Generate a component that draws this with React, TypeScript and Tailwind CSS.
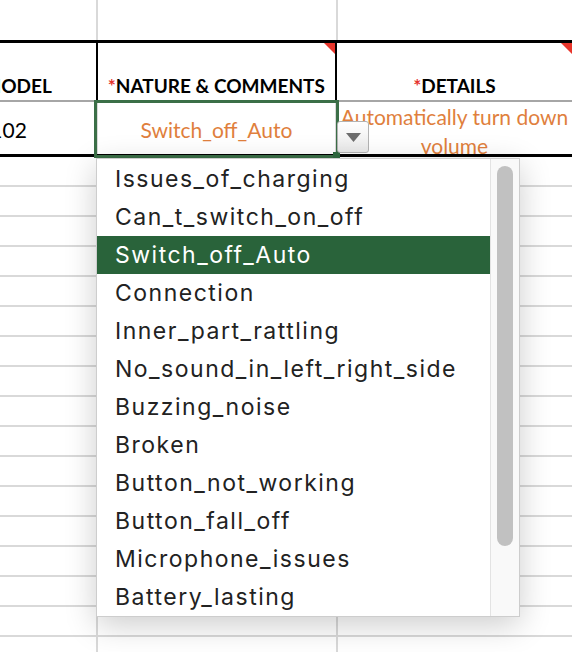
import React from 'react';

const options = [
  'Issues_of_charging',
  'Can_t_switch_on_off',
  'Switch_off_Auto',
  'Connection',
  'Inner_part_rattling',
  'No_sound_in_left_right_side',
  'Buzzing_noise',
  'Broken',
  'Button_not_working',
  'Button_fall_off',
  'Microphone_issues',
  'Battery_lasting',
];

const selected = 'Switch_off_Auto';

// red comment marker in the top-right corner of a header cell
const CommentMark = () => (
  <svg className="absolute right-0 top-0" width="11" height="11" viewBox="0 0 11 11">
    <polygon points="0,0 11,0 11,11" fill="#e8352b" />
  </svg>
);

const BlankRow = () => (
  <div className="flex h-[30px] border-b-2 border-[#d9d9d9]">
    <div className="w-[98px] border-r-2 border-[#d9d9d9]" />
    <div className="w-[240px] border-r-2 border-[#d9d9d9]" />
    <div className="flex-1" />
  </div>
);

const Dropdown: React.FC<{ items: string[]; value: string }> = ({ items, value }) => (
  <div className="absolute left-[96px] top-[158px] flex h-[459px] w-[424px] border border-[#cdcdcd] bg-white shadow-[0_8px_30px_rgba(0,0,0,0.2)]">
    <ul className="flex-1 pt-[1px] font-['Inter',sans-serif] text-[23px] tracking-[1.5px] text-[#222]">
      {items.map((item) => (
        <li
          key={item}
          className={`flex h-[38px] items-center pl-[18px] whitespace-nowrap ${
            item === value ? 'bg-[#29633a] text-white' : ''
          }`}
        >
          {item}
        </li>
      ))}
    </ul>
    <div className="w-[29px] border-l border-[#e3e3e3] bg-[#f9f9f9] pt-[7px]">
      <div className="mx-auto h-[380px] w-[16px] rounded-full bg-[#c1c1c1]" />
    </div>
  </div>
);

export default function App() {
  return (
    <div className="relative h-[652px] w-[572px] overflow-hidden bg-white font-['Lato',sans-serif]">
      {/* row above the header */}
      <div className="flex h-[40px]">
        <div className="w-[98px] border-r-2 border-[#d9d9d9]" />
        <div className="w-[240px] border-r-2 border-[#d9d9d9]" />
        <div className="flex-1" />
      </div>

      {/* header */}
      <div className="flex h-[62px] border-t-[3px] border-b-2 border-t-black border-b-[#a6a6a6] text-[19px] font-bold text-black">
        <div className="flex w-[98px] items-end justify-end overflow-hidden whitespace-nowrap border-r-2 border-black pr-[44px]">
          MODEL
        </div>
        <div className="relative flex w-[240px] items-end justify-center whitespace-nowrap border-r-2 border-black">
          <span className="text-[#e5322d]">*</span>NATURE &amp; COMMENTS
          <CommentMark />
        </div>
        <div className="relative flex w-[236px] items-end justify-center whitespace-nowrap">
          <span className="text-[#e5322d]">*</span>DETAILS
          <CommentMark />
        </div>
      </div>

      {/* data row */}
      <div className="flex h-[55px] border-b-[3px] border-black text-[21px]">
        <div className="flex w-[98px] items-center justify-end overflow-hidden whitespace-nowrap border-r-2 border-[#d9d9d9] pr-[69px] pt-[4px] text-black">
          KT102
        </div>
        <div className="flex w-[240px] items-center justify-center border-r-2 border-[#d9d9d9] pt-[4px] text-[#e07f3d]">
          Switch_off_Auto
        </div>
        <div className="w-[236px] overflow-hidden text-center leading-[29px] text-[#e07f3d]">
          Automatically turn down volume
        </div>
      </div>

      {Array.from({ length: 17 }).map((_, i) => (
        <BlankRow key={i} />
      ))}

      {/* active cell */}
      <div className="absolute left-[94px] top-[100px] h-[58px] w-[245px] border-[3px] border-[#3b6f47]" />
      <div className="absolute left-[333px] top-[152px] h-[6px] w-[7px] bg-[#2f6a3f]" />

      {/* list arrow button */}
      <div className="absolute left-[337px] top-[121px] flex h-[32px] w-[32px] items-center justify-center rounded-[3px] border border-[#b3b3b3] bg-gradient-to-b from-white to-[#e9e9e9]">
        <svg width="15" height="9" viewBox="0 0 15 9">
          <polygon points="0,0 15,0 7.5,9" fill="#6d6d6d" />
        </svg>
      </div>

      <Dropdown items={options} value={selected} />
    </div>
  );
}
